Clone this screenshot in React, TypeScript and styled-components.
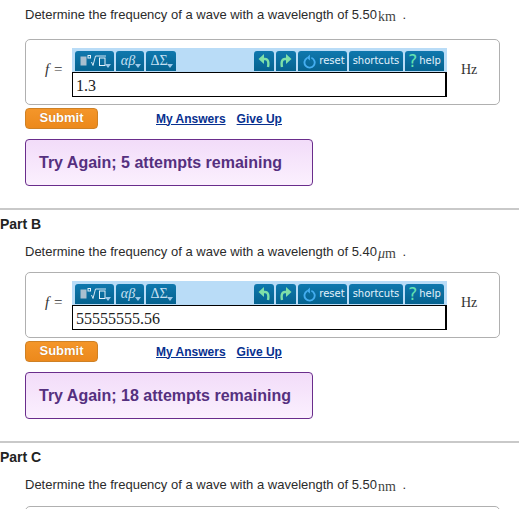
import React, { FC, ReactNode } from "react"
import styled, { createGlobalStyle } from "styled-components"

const GlobalStyle = createGlobalStyle`
  html, body {
    margin: 0;
    padding: 0;
    background: #fff;
    overflow: hidden;
  }
  body {
    font-family: "Liberation Sans", Arial, sans-serif;
    font-size: 13px;
    color: #2b2b2b;
  }
`

type PartProps = {
  name?: string
  value: string
  unit: ReactNode
  answer: string
  attempts: number
}

const Caret = () => (
  <CaretIcon viewBox="0 0 6 4">
    <path d="M0 0h6L3 4z" fill="#9cc9ea" />
  </CaretIcon>
)

const Toolbar: FC = () => (
  <ToolbarRow>
    <ToolGroup>
      <ToolButton $width={39}>
        <svg width="30" height="16" viewBox="0 0 30 16">
          <rect x="0.500" y="3.500" width="6" height="9" fill="#a9bfcf" />
          <rect x="8" y="2.500" width="2.500" height="2.500" fill="none" stroke="#e6f2fa" />
          <path d="M11.500 9l1.500 3.500L15.500 3H26" fill="none" stroke="#d5e8f5" />
          <rect x="19.500" y="5" width="5.500" height="7.500" fill="none" stroke="#e6f2fa" />
        </svg>
        <Caret />
      </ToolButton>
      <ToolButton $width={28}>
        <GreekGlyph>αβ</GreekGlyph>
        <Caret />
      </ToolButton>
      <ToolButton $width={30}>
        <GreekGlyph $upright>ΔΣ</GreekGlyph>
        <Caret />
      </ToolButton>
    </ToolGroup>
    <ToolGroup>
      <ToolButton $width={20}>
        <svg width="12" height="15" viewBox="0 0 12 15">
          <path d="M5 6h2c3 0 4 3 3 8" fill="none" stroke="#7fe0a8" strokeWidth="2.400" />
          <path d="M0.500 6L6 1v10z" fill="#7fe0a8" />
        </svg>
      </ToolButton>
      <ToolButton $width={20}>
        <svg width="12" height="15" viewBox="0 0 12 15">
          <path d="M7 6H5C2 6 1 9 2 14" fill="none" stroke="#7fe0a8" strokeWidth="2.400" />
          <path d="M11.500 6L6 1v10z" fill="#7fe0a8" />
        </svg>
      </ToolButton>
      <ToolButton $width={49} $inset={3}>
        <svg width="13" height="16" viewBox="0 0 14 16">
          <path d="M4.500 4.800a5.500 5.500 0 1 0 4.500 -0.300" fill="none" stroke="#45aef0" strokeWidth="2" />
          <path d="M7.500 1v6.500L4 4.500z" fill="#45aef0" />
        </svg>
        <ToolLabel>reset</ToolLabel>
      </ToolButton>
      <ToolButton $width={54}>
        <ToolLabel>shortcuts</ToolLabel>
      </ToolButton>
      <ToolButton $width={39}>
        <HelpMark>?</HelpMark>
        <ToolLabel>help</ToolLabel>
      </ToolButton>
    </ToolGroup>
  </ToolbarRow>
)

const Part: FC<PartProps> = ({ name, value, unit, answer, attempts }) => (
  <PartSection $titled={!!name}>
    {name && <PartTitle>{name}</PartTitle>}
    <Question>
      Determine the frequency of a wave with a wavelength of {value}
      <UnitText>{unit}</UnitText> .
    </Question>
    <AnswerBox $gap={name ? 12 : 16}>
      <VarLabel>
        <i>f</i> =
      </VarLabel>
      <Editor>
        <Toolbar />
        <AnswerInput>{answer}</AnswerInput>
      </Editor>
      <HzLabel>Hz</HzLabel>
    </AnswerBox>
    <ActionRow>
      <SubmitButton>Submit</SubmitButton>
      <ActionLink>My Answers</ActionLink>
      <ActionLink>Give Up</ActionLink>
    </ActionRow>
    <Feedback>Try Again; {attempts} attempts remaining</Feedback>
  </PartSection>
)

const App: FC = () => (
  <Page>
    <GlobalStyle />
    <Part value="5.50" unit="km" answer="1.3" attempts={5} />
    <Part
      name="Part B"
      value="5.40"
      unit={
        <>
          <i>μ</i>m
        </>
      }
      answer="55555555.56"
      attempts={18}
    />
    <PartSection $titled>
      <PartTitle>Part C</PartTitle>
      <Question>
        Determine the frequency of a wave with a wavelength of 5.50
        <UnitText>nm</UnitText> .
      </Question>
      <AnswerBox $gap={13} />
    </PartSection>
  </Page>
)

const Page = styled.div`
  width: 519px;
  height: 509px;
  overflow: hidden;
`
const PartSection = styled.section<{ $titled: boolean }>`
  padding: ${({ $titled }) => ($titled ? "6px" : "7px")} 0 22px 25px;
  border-top: ${({ $titled }) => ($titled ? "2px solid #c9c9c9" : "none")};
`
const PartTitle = styled.h3`
  margin: 0 0 12px -25px;
  height: 16px;
  font-size: 14px;
  line-height: 16px;
  font-weight: bold;
  color: #222;
`
const Question = styled.p`
  margin: 0;
  height: 16px;
  font-size: 13px;
  line-height: 16px;
  color: #2b2b2b;
`
const UnitText = styled.span`
  position: relative;
  top: 2px;
  margin: 0 3px 0 1px;
  font-family: "Liberation Serif", serif;
  font-size: 14px;
  color: #444;
`
const AnswerBox = styled.div<{ $gap: number }>`
  display: flex;
  align-items: center;
  box-sizing: border-box;
  width: 475px;
  height: 66px;
  margin-top: ${({ $gap }) => $gap}px;
  padding: 8px 0 8px 19px;
  border: 1px solid #b0b0b0;
  border-radius: 5px;
`
const VarLabel = styled.span`
  width: 27px;
  margin-bottom: 5px;
  font-family: "Liberation Serif", serif;
  font-size: 15px;
  word-spacing: 1px;
  color: #333;
`
const Editor = styled.div`
  width: 375px;
`
const ToolbarRow = styled.div`
  display: flex;
  justify-content: space-between;
  box-sizing: border-box;
  height: 24px;
  padding: 3px 3px 0;
  background: #b9dcf7;
`
const ToolGroup = styled.div`
  display: flex;
  gap: 2px;
`
const ToolButton = styled.div<{ $width: number; $inset?: number }>`
  display: flex;
  align-items: center;
  justify-content: center;
  gap: ${({ $inset }) => ($inset ? 3 : 2)}px;
  position: relative;
  box-sizing: border-box;
  width: ${({ $width }) => $width}px;
  height: 20px;
  padding-left: ${({ $inset }) => $inset ?? 0}px;
  border-radius: 3px 3px 0 0;
  background: linear-gradient(#0f78ae, #05628f);
`
const CaretIcon = styled.svg`
  position: absolute;
  right: 3px;
  bottom: 3px;
  width: 6px;
  height: 4px;
`
const GreekGlyph = styled.span<{ $upright?: boolean }>`
  margin-right: 4px;
  font-family: "Liberation Serif", serif;
  font-size: 14px;
  font-style: ${({ $upright }) => ($upright ? "normal" : "italic")};
  color: #c6e0f3;
`
const ToolLabel = styled.span`
  font-family: "DejaVu Sans", sans-serif;
  font-size: 10px;
  color: #e4f2fb;
`
const HelpMark = styled.span`
  font-family: "DejaVu Sans", sans-serif;
  font-size: 17px;
  line-height: 20px;
  color: #62e2b0;
`
const AnswerInput = styled.div`
  box-sizing: border-box;
  height: 25px;
  padding-left: 3px;
  border: 1px solid #000;
  border-width: 1px 2px 1px 1px;
  font-family: "Liberation Serif", serif;
  font-size: 16px;
  line-height: 26px;
  color: #222;
`
const HzLabel = styled.span`
  margin: 0 0 5px 14px;
  font-family: "Liberation Serif", serif;
  font-size: 14px;
  color: #333;
`
const ActionRow = styled.div`
  display: flex;
  align-items: center;
  height: 21px;
  margin-top: 3px;
`
const SubmitButton = styled.div`
  box-sizing: border-box;
  width: 73px;
  height: 21px;
  margin-right: 58px;
  border: 1px solid #cf8125;
  border-radius: 4px;
  background: linear-gradient(#f4962a, #ec891c);
  font-size: 13px;
  font-weight: bold;
  line-height: 18px;
  text-align: center;
  color: #fff;
  text-shadow: 0 0 1px #b5650f;
`
const ActionLink = styled.a`
  margin-right: 11px;
  font-size: 12px;
  font-weight: bold;
  color: #07308f;
  text-decoration: underline;
`
const Feedback = styled.div`
  box-sizing: border-box;
  width: 288px;
  height: 47px;
  margin-top: 10px;
  padding-left: 13px;
  border: 1px solid #6a2d8c;
  border-radius: 4px;
  background: linear-gradient(#f2dcf9, #fbf0fe);
  font-size: 16px;
  font-weight: bold;
  line-height: 45px;
  color: #55307f;
`

export default App
